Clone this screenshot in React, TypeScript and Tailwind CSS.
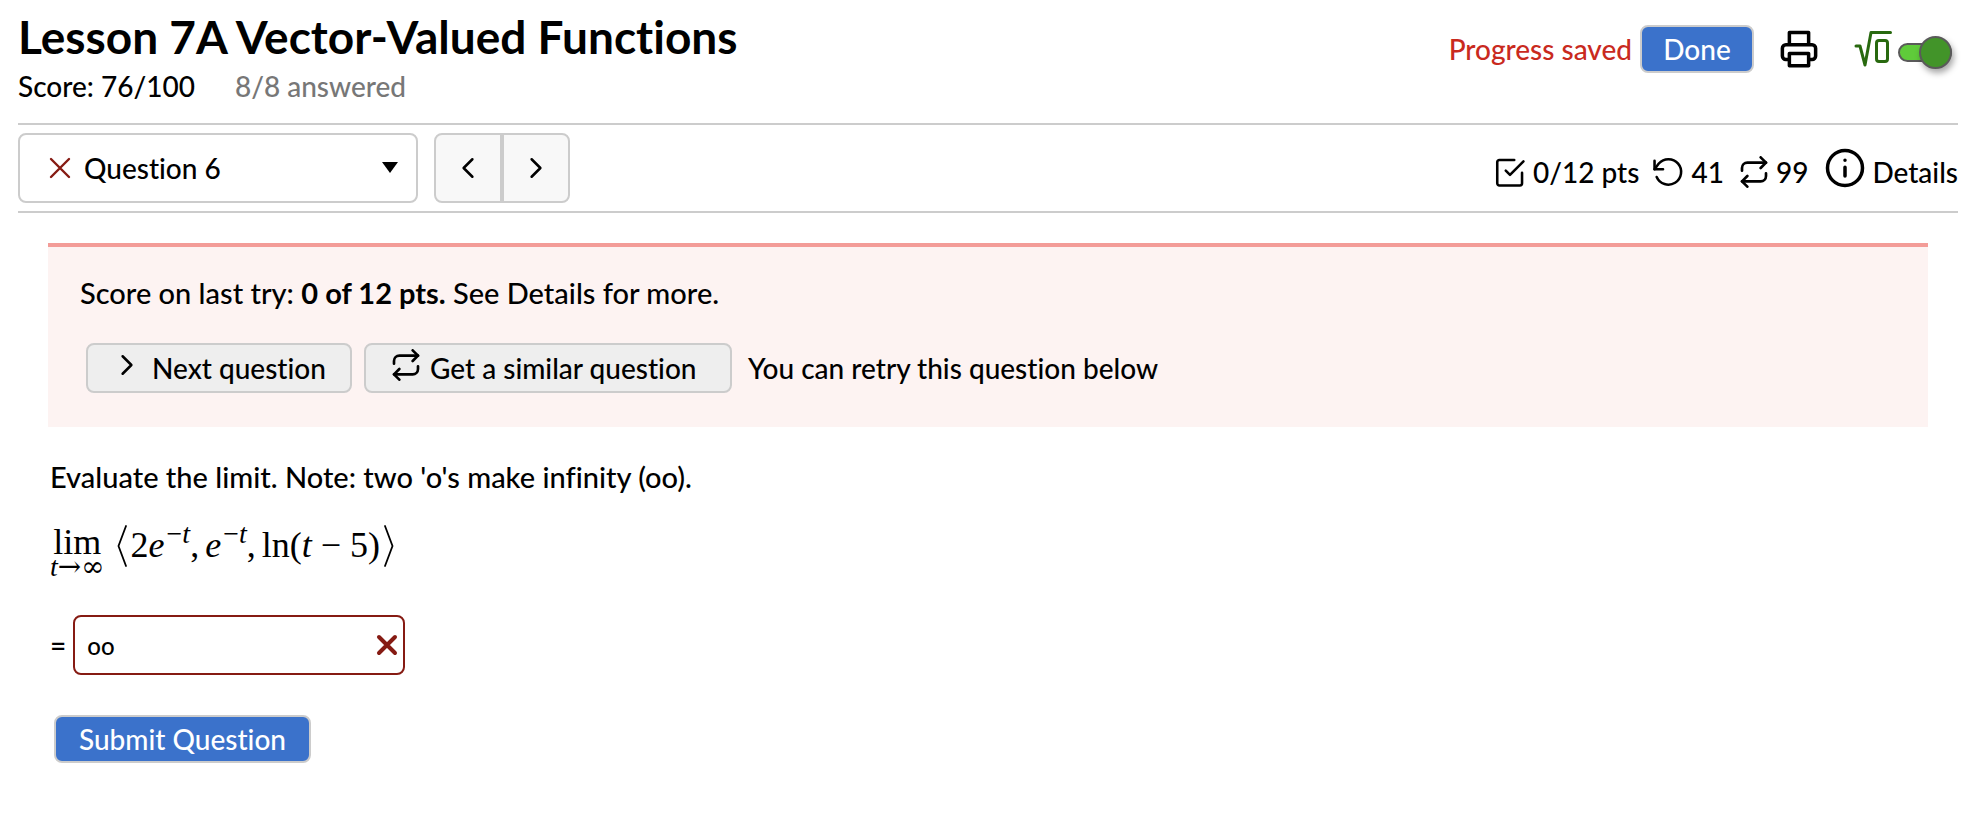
import React from "react";

type IconProps = { className?: string; children: React.ReactNode; width?: number };

function Icon({ className, children, width = 2 }: IconProps) {
  return (
    <svg
      viewBox="0 0 24 24"
      className={className}
      fill="none"
      stroke="currentColor"
      strokeWidth={width}
      strokeLinecap="round"
      strokeLinejoin="round"
      aria-hidden="true"
    >
      {children}
    </svg>
  );
}

function RepeatIcon({ className }: { className?: string }) {
  return (
    <Icon className={className}>
      <path d="M17 1l4 4-4 4" />
      <path d="M3 11V9a4 4 0 0 1 4-4h14" />
      <path d="M7 23l-4-4 4-4" />
      <path d="M21 13v2a4 4 0 0 1-4 4H3" />
    </Icon>
  );
}

function Chevron({ dir, className }: { dir: "left" | "right"; className?: string }) {
  return (
    <Icon className={className}>
      <path d={dir === "left" ? "M15.500 5l-7 7 7 7" : "M8.500 5l7 7-7 7"} />
    </Icon>
  );
}

function Angle({ dir }: { dir: "left" | "right" }) {
  return (
    <svg viewBox="0 0 10 42" className="h-[42px] w-[10px] shrink-0" fill="none" stroke="currentColor" strokeWidth="1.800" strokeLinecap="round" aria-hidden="true">
      <path d={dir === "left" ? "M9 1L1.500 21 9 41" : "M1 1l7.500 20L1 41"} />
    </svg>
  );
}

function ExpTerm() {
  return (
    <span>
      <i>e</i>
      <sup className="relative -top-[14px] ml-[2px] text-[28px] leading-none align-baseline">
        −<i>t</i>
      </sup>
      ,
    </span>
  );
}

function Header() {
  return (
    <header className="flex items-start justify-between pt-2 pb-[17px]">
      <div>
        <h1 className="text-[46px] leading-[58px] font-bold">Lesson 7A Vector-Valued Functions</h1>
        <p className="flex gap-10 leading-10">
          <span>Score: 76/100</span>
          <span className="text-[#777]">8/8 answered</span>
        </p>
      </div>
      <div className="mt-[17px] flex items-center">
        <span className="mr-2 text-[#c92a1e]">Progress saved</span>
        <button type="button" className="h-12 w-[114px] rounded-lg border-2 border-[#ccc] bg-[#3b72cb] text-white">
          Done
        </button>
        <button type="button" aria-label="Print" className="ml-6">
          <Icon className="size-[42px]">
            <path d="M6.500 9V2.500h11V9" />
            <path d="M6 18H4.500a2 2 0 0 1-2-2v-4.500a2 2 0 0 1 2-2h15a2 2 0 0 1 2 2V16a2 2 0 0 1-2 2H18" />
            <path d="M6.500 14.500h11v7h-11z" />
          </Icon>
        </button>
        <label className="ml-[34px] flex items-center">
          <svg viewBox="0 0 38 38" className="size-[38px] text-[#28690f]" fill="none" stroke="currentColor" strokeWidth="3" strokeLinecap="round" strokeLinejoin="round" aria-hidden="true">
            <path d="M2 16h4l5 19L17 2.500h19.500" />
            <rect x="22.500" y="10.500" width="11" height="21" rx="2.500" />
          </svg>
          <input
            type="checkbox"
            role="switch"
            aria-label="Equation editor"
            defaultChecked
            className="relative mt-[6px] mr-[6px] ml-[6px] h-[19px] w-[54px] appearance-none rounded-full border-2 border-[#5a5a5a] bg-[#5fcb3a] before:absolute before:-top-[9px] before:right-[-2px] before:size-[33px] before:rounded-full before:border-2 before:border-[#5a5a5a] before:bg-[#429429] before:shadow-[2px_4px_6px_rgba(0,0,0,0.35)]"
          />
        </label>
      </div>
    </header>
  );
}

function QuestionBar() {
  return (
    <nav className="flex items-center justify-between border-y-2 border-[#ccc] py-2">
      <div className="flex gap-4">
        <div className="relative">
          <select aria-label="Question" className="h-[70px] w-[400px] appearance-none rounded-lg border-2 border-[#ccc] bg-white pl-16">
            <option>Question 6</option>
          </select>
          <Icon width={2.4} className="pointer-events-none absolute top-[23px] left-[30px] size-6 text-[#861b13]">
            <path d="M3 3l18 18M21 3L3 21" />
          </Icon>
          <svg viewBox="0 0 16 11" className="pointer-events-none absolute top-[29px] right-[20px] h-[11px] w-4" aria-hidden="true">
            <path d="M0 0h16L8 11z" />
          </svg>
        </div>
        <div className="flex">
          <button type="button" aria-label="Previous question" className="flex h-[70px] w-[68px] items-center justify-center rounded-l-lg border-2 border-[#ccc] bg-[#f8f8f8]">
            <Chevron dir="left" className="size-[30px]" />
          </button>
          <button type="button" aria-label="Next question" className="flex h-[70px] w-[68px] items-center justify-center rounded-r-lg border-2 border-[#ccc] bg-[#f8f8f8]">
            <Chevron dir="right" className="size-[30px]" />
          </button>
        </div>
      </div>
      <div className="mt-2 flex items-center">
        <Icon className="mr-[6px] size-[34px]" width={1.8}>
          <path d="M9 11l3 3 9.500-9.500" />
          <path d="M20.500 12.500V20a1.500 1.500 0 0 1-1.500 1.500H4.500A1.500 1.500 0 0 1 3 20V5a1.500 1.500 0 0 1 1.500-1.500H15" />
        </Icon>
        <span>0/12 pts</span>
        <Icon className="mr-[6px] ml-3 size-[34px]" width={1.8}>
          <path d="M2.500 4v6h6" />
          <path d="M4 15.500a9 9 0 1 0 1.500-9.500L2.500 10" />
        </Icon>
        <span>41</span>
        <RepeatIcon className="mr-[6px] ml-[14px] size-8" />
        <span>99</span>
        <a href="#details" className="ml-4 flex items-center gap-[6px]">
          <Icon className="-mt-[8px] size-[42px]">
            <circle cx="12" cy="12" r="10" />
            <path d="M12 11.500v5M12 7.500v.1" />
          </Icon>
          Details
        </a>
      </div>
    </nav>
  );
}

function ScoreNotice() {
  return (
    <section className="mt-[30px] border-t-4 border-[#f39c98] bg-[#fdf3f2] px-8 pt-[26px] pb-[34px]">
      <p className="text-[29px] leading-10">
        Score on last try: <strong>0 of 12 pts.</strong> See Details for more.
      </p>
      <div className="mt-[30px] flex items-center pl-[6px]">
        <button type="button" className="flex h-[50px] w-[266px] items-center rounded-lg border-2 border-[#ccc] bg-[#eee] pl-6">
          <Chevron dir="right" className="-mt-[6px] mr-[10px] size-[30px]" />
          Next question
        </button>
        <button type="button" className="ml-3 flex h-[50px] w-[368px] items-center rounded-lg border-2 border-[#ccc] bg-[#eee] pl-6">
          <RepeatIcon className="-mt-[6px] mr-2 size-8" />
          Get a similar question
        </button>
        <span className="ml-4">You can retry this question below</span>
      </div>
    </section>
  );
}

function Formula() {
  return (
    <div className="mt-7 flex font-['Liberation_Serif',serif] text-[36px] leading-[42px] font-normal">
      <div className="flex flex-col items-center">
        <span className="leading-[34px]">lim</span>
        <span className="text-[28px] leading-4">
          <i>t</i>
          <span className="font-['DejaVu_Serif',serif]">→∞</span>
        </span>
      </div>
      <div className="ml-3 flex">
        <Angle dir="left" />
        <span className="ml-1 flex gap-[6px] leading-10">
          <span>2<ExpTerm /></span>
          <ExpTerm />
          <span>
            ln(<i>t</i> − 5)
          </span>
        </span>
        <span className="ml-1 flex">
          <Angle dir="right" />
        </span>
      </div>
    </div>
  );
}

export default function App() {
  return (
    <div className="min-h-screen bg-white px-[18px] font-['Lato',sans-serif] text-[28px] leading-10 font-medium text-black [font-variant-ligatures:none]">
      <Header />
      <QuestionBar />
      <main className="px-[30px]">
        <ScoreNotice />
        <form className="pl-[2px]" onSubmit={(e) => e.preventDefault()}>
          <p className="mt-[30px] text-[29px]">Evaluate the limit. Note: two 'o's make infinity (oo).</p>
          <Formula />
          <div className="mt-10 flex items-center">
            <label htmlFor="answer">=</label>
            <div className="relative ml-[7px]">
              <input
                id="answer"
                type="text"
                defaultValue="oo"
                className="h-[60px] w-[332px] rounded-lg border-2 border-[#861b13] bg-white pl-3 text-[24px]"
              />
              <Icon width={4} className="pointer-events-none absolute top-[18px] right-[6px] size-6 text-[#861b13]">
                <path d="M4 4l16 16M20 4L4 20" />
              </Icon>
            </div>
          </div>
          <button type="submit" className="mt-10 ml-1 h-12 w-[257px] rounded-lg border-2 border-[#ccc] bg-[#3b72cb] text-white">
            Submit Question
          </button>
        </form>
      </main>
    </div>
  );
}
